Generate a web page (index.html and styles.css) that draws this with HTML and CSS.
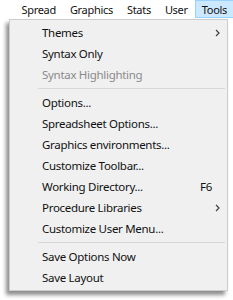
FILE: index.html
```html
<!DOCTYPE html>
<html>
<head>
<meta charset="utf-8">
<link rel="stylesheet" href="styles.css">
</head>
<body>
<div class="menubar">
  <span class="top-item">Spread</span>
  <span class="top-item">Graphics</span>
  <span class="top-item">Stats</span>
  <span class="top-item">User</span>
  <span class="top-item active">Tools</span>
</div>
<div class="dropdown">
  <div class="row"><span class="label">Themes</span><svg class="chev" width="5" height="8" viewBox="0 0 5 8"><polyline points="1,1 4,4 1,7" fill="none" stroke="#404040" stroke-width="1.2"/></svg></div>
  <div class="row"><span class="label">Syntax Only</span></div>
  <div class="row disabled"><span class="label">Syntax Highlighting</span></div>
  <div class="sep"></div>
  <div class="row"><span class="label">Options...</span></div>
  <div class="row"><span class="label">Spreadsheet Options...</span></div>
  <div class="row"><span class="label">Graphics environments...</span></div>
  <div class="row"><span class="label">Customize Toolbar...</span></div>
  <div class="row"><span class="label">Working Directory...</span><span class="key">F6</span></div>
  <div class="row"><span class="label">Procedure Libraries</span><svg class="chev" width="5" height="8" viewBox="0 0 5 8"><polyline points="1,1 4,4 1,7" fill="none" stroke="#404040" stroke-width="1.2"/></svg></div>
  <div class="row"><span class="label">Customize User Menu...</span></div>
  <div class="sep"></div>
  <div class="row"><span class="label">Save Options Now</span></div>
  <div class="row"><span class="label">Save Layout</span></div>
</div>
</body>
</html>
```

FILE: styles.css
```css
html, body {
  margin: 0;
  padding: 0;
  background: #ffffff;
}
body {
  font-family: "Noto Sans", "Open Sans", sans-serif;
  font-size: 11.5px;
  letter-spacing: -0.3px;
  color: #111111;
  width: 233px;
  height: 300px;
  overflow: hidden;
}
.menubar {
  display: flex;
  justify-content: flex-end;
  height: 19px;
  background: #ffffff;
  font-size: 11px;
}
.top-item {
  display: flex;
  align-items: center;
  height: 18px;
  padding: 0 7px;
  box-sizing: border-box;
  line-height: 1;
}
.top-item.active {
  background: #cce8ff;
  border: 1px solid #99d1ff;
  border-right: none;
  padding: 0 6px 0 6px;
}
.dropdown {
  margin-left: 9px;
  width: 219px;
  box-sizing: border-box;
  background: #f0f0f0;
  border: 1px solid #cccccc;
  padding: 2px 0 2px 0;
  box-shadow: -3px 4px 4px rgba(0, 0, 0, 0.45);
}
.row {
  display: flex;
  align-items: center;
  height: 21px;
  padding-left: 32px;
  padding-right: 6px;
}
.label {
  flex: 1;
  white-space: nowrap;
}
.disabled {
  color: #8a8a8a;
}
.key {
  margin-right: 9px;
}
.chev {
  display: block;
  margin-right: 1px;
}
.sep {
  height: 7px;
  display: flex;
  align-items: center;
  padding-left: 28px;
  padding-right: 2px;
}
.sep::before {
  content: "";
  display: block;
  flex: 1;
  height: 1px;
  background: #d7d7d7;
}
```
